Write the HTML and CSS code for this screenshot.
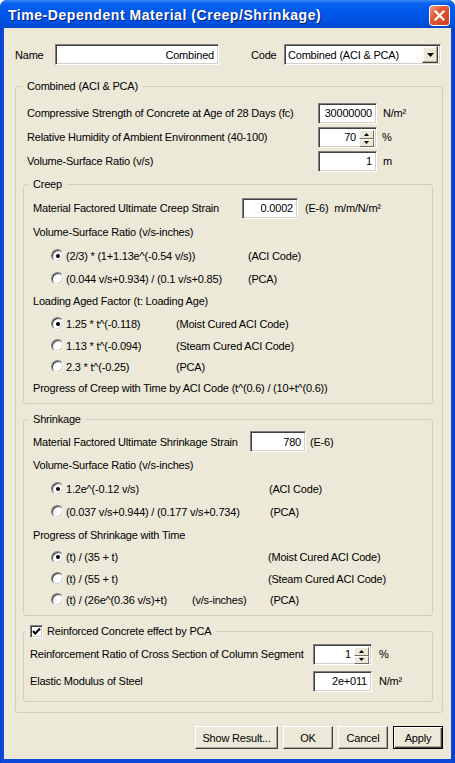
FILE: index.html
```html
<!DOCTYPE html>
<html>
<head>
<meta charset="utf-8">
<title>Time-Dependent Material (Creep/Shrinkage)</title>
<link rel="stylesheet" href="styles.css">
</head>
<body>
<div class="window">
  <div class="titlebar">
    <span class="title">Time-Dependent Material (Creep/Shrinkage)</span>
    <span class="close">
      <svg width="21" height="21" viewBox="0 0 21 21">
        <defs>
          <linearGradient id="cg" x1="0" y1="0" x2="1" y2="1">
            <stop offset="0" stop-color="#F3A68C"/>
            <stop offset="0.35" stop-color="#E45C38"/>
            <stop offset="1" stop-color="#C63F1E"/>
          </linearGradient>
        </defs>
        <rect x="0.5" y="0.5" width="20" height="20" rx="3" fill="url(#cg)" stroke="#FFFFFF"/>
        <path d="M6.5 6.5 L14.5 14.5 M14.5 6.5 L6.5 14.5" stroke="#FFFFFF" stroke-width="2.2" stroke-linecap="square"/>
      </svg>
    </span>
  </div>
  <div class="frame">
    <div class="client">
      <div class="toprow">
        <span class="lbl-name">Name</span>
        <span class="edit name-edit">Combined</span>
        <span class="lbl-code">Code</span>
        <span class="combo">
          <span class="combo-text">Combined (ACI &amp; PCA)</span>
          <span class="drop"><svg width="7" height="4" viewBox="0 0 7 4"><path d="M0 0 H7 L3.5 4 Z" fill="#000"/></svg></span>
        </span>
      </div>

      <fieldset class="group outer">
        <legend>Combined (ACI &amp; PCA)</legend>
        <div class="row h24">
          <span class="lab lw291">Compressive Strength of Concrete at Age of 28 Days (fc)</span>
          <span class="edit ew59">30000000</span>
          <span class="unit">N/m²</span>
        </div>
        <div class="row h24">
          <span class="lab lw291">Relative Humidity of Ambient Environment (40-100)</span>
          <span class="edit ew59 spin-edit">
            <span class="val">70</span>
            <span class="spin">
              <span class="sb sb-up"><svg width="5" height="3" viewBox="0 0 5 3"><path d="M2.5 0 L5 3 H0 Z" fill="#000"/></svg></span>
              <span class="sb sb-dn"><svg width="5" height="3" viewBox="0 0 5 3"><path d="M0 0 H5 L2.5 3 Z" fill="#000"/></svg></span>
            </span>
          </span>
          <span class="unit unit-pct">%</span>
        </div>
        <div class="row h24">
          <span class="lab lw291">Volume-Surface Ratio (v/s)</span>
          <span class="edit ew59">1</span>
          <span class="unit">m</span>
        </div>

        <fieldset class="group creep">
          <legend>Creep</legend>
          <div class="row h24">
            <span class="lab lw209">Material Factored Ultimate Creep Strain</span>
            <span class="edit ew56">0.0002</span>
            <span class="unit unit7">(E-6)  m/m/N/m²</span>
          </div>
          <div class="row h24"><span class="lab">Volume-Surface Ratio (v/s-inches)</span></div>
          <div class="row h23 opt">
            <span class="radio"><span class="dot"></span></span>
            <span class="ftxt fw182">(2/3) * (1+1.13e^(-0.54 v/s))</span><span class="ftxt">(ACI Code)</span>
          </div>
          <div class="row h23 opt">
            <span class="radio"></span>
            <span class="ftxt fw182">(0.044 v/s+0.934) / (0.1 v/s+0.85)</span><span class="ftxt">(PCA)</span>
          </div>
          <div class="row h22"><span class="lab">Loading Aged Factor (t: Loading Age)</span></div>
          <div class="row h23 opt">
            <span class="radio"><span class="dot"></span></span>
            <span class="ftxt fw110">1.25 * t^(-0.118)</span><span class="ftxt">(Moist Cured ACI Code)</span>
          </div>
          <div class="row h21 opt">
            <span class="radio"></span>
            <span class="ftxt fw110">1.13 * t^(-0.094)</span><span class="ftxt">(Steam Cured ACI Code)</span>
          </div>
          <div class="row h21 opt">
            <span class="radio"></span>
            <span class="ftxt fw110">2.3 * t^(-0.25)</span><span class="ftxt">(PCA)</span>
          </div>
          <div class="row h21"><span class="lab">Progress of Creep with Time by ACI Code (t^(0.6) / (10+t^(0.6))</span></div>
        </fieldset>

        <fieldset class="group shrink">
          <legend>Shrinkage</legend>
          <div class="row h23">
            <span class="lab lw217">Material Factored Ultimate Shrinkage Strain</span>
            <span class="edit ew56">780</span>
            <span class="unit unit5">(E-6)</span>
          </div>
          <div class="row h24"><span class="lab">Volume-Surface Ratio (v/s-inches)</span></div>
          <div class="row h23 opt">
            <span class="radio"><span class="dot"></span></span>
            <span class="ftxt fw203">1.2e^(-0.12 v/s)</span><span class="ftxt">(ACI Code)</span>
          </div>
          <div class="row h23 opt">
            <span class="radio"></span>
            <span class="ftxt fw204">(0.037 v/s+0.944) / (0.177 v/s+0.734)</span><span class="ftxt">(PCA)</span>
          </div>
          <div class="row h23"><span class="lab">Progress of Shrinkage with Time</span></div>
          <div class="row h22 opt">
            <span class="radio"><span class="dot"></span></span>
            <span class="ftxt fw202">(t) / (35 + t)</span><span class="ftxt">(Moist Cured ACI Code)</span>
          </div>
          <div class="row h21 opt">
            <span class="radio"></span>
            <span class="ftxt fw202">(t) / (55 + t)</span><span class="ftxt">(Steam Cured ACI Code)</span>
          </div>
          <div class="row h21 opt">
            <span class="radio"></span>
            <span class="ftxt fw126">(t) / (26e^(0.36 v/s)+t)</span><span class="ftxt fw78">(v/s-inches)</span><span class="ftxt">(PCA)</span>
          </div>
        </fieldset>

        <fieldset class="group reinf">
          <legend><span class="check"><svg width="11" height="11" viewBox="0 0 11 11"><path d="M2 5 L4.3 7.5 L9 2.5" stroke="#000" stroke-width="2" fill="none"/></svg></span><span class="leg-text">Reinforced Concrete effect by PCA</span></legend>
          <div class="row h22">
            <span class="lab lw283">Reinforcement Ratio of Cross Section of Column Segment</span>
            <span class="edit ew59 spin-edit">
              <span class="val">1</span>
              <span class="spin">
                <span class="sb sb-up"><svg width="5" height="3" viewBox="0 0 5 3"><path d="M2.5 0 L5 3 H0 Z" fill="#000"/></svg></span>
                <span class="sb sb-dn"><svg width="5" height="3" viewBox="0 0 5 3"><path d="M0 0 H5 L2.5 3 Z" fill="#000"/></svg></span>
              </span>
            </span>
            <span class="unit unit7">%</span>
          </div>
          <div class="row h22 gap5">
            <span class="lab lw283">Elastic Modulus of Steel</span>
            <span class="edit ew59">2e+011</span>
            <span class="unit unit7">N/m²</span>
          </div>
        </fieldset>
      </fieldset>

      <div class="buttons">
        <span class="btn bw83">Show Result...</span>
        <span class="btn">OK</span>
        <span class="btn">Cancel</span>
        <span class="btn def">Apply</span>
      </div>
    </div>
  </div>
</div>
</body>
</html>
```
FILE: styles.css
```css
* { box-sizing: border-box; }
html, body { margin: 0; padding: 0; background: #FFFFFF; }
body {
  font-family: "Liberation Sans", Arial, sans-serif;
  font-size: 11px;
  color: #000;
  letter-spacing: -0.2px;
}
.window {
  width: 455px;
  height: 763px;
  display: flex;
  flex-direction: column;
  border-radius: 7px 7px 0 0;
  overflow: hidden;
  background: #0846D8;
}
.titlebar {
  height: 28px;
  flex: none;
  display: flex;
  align-items: flex-start;
  padding: 0 5px 0 8px;
  background: linear-gradient(to bottom, #3C8CF8 0px, #0A62EE 3px, #0058EA 12px, #0052E2 22px, #0447CE 28px);
}
.title {
  font-family: "Liberation Sans", Arial, sans-serif;
  font-weight: bold;
  font-size: 14px;
  letter-spacing: 0.55px;
  color: #FFFFFF;
  line-height: 16px;
  margin-top: 7px;
  text-shadow: 1px 1px 0 #0A1E80;
}
.close {
  margin-left: auto;
  margin-top: 5px;
  width: 21px;
  height: 21px;
  display: flex;
}
.frame {
  flex: 1;
  padding: 0 4px 4px;
  background: linear-gradient(to right, #0A3CC8 0, #0C4ADC 2px, #0C4ADC 451px, #0A3CC8 455px);
  display: flex;
}
.client {
  flex: 1;
  background: #ECE9D8;
  padding: 16px 8px 10px 11px;
  display: flex;
  flex-direction: column;
}
.toprow {
  display: flex;
  align-items: center;
  height: 21px;
}
.lbl-name { width: 40px; }
.name-edit { width: 164px; }
.lbl-code { width: 33px; margin-left: 32px; }
.combo {
  width: 157px;
  height: 21px;
  background: #fff;
  border-top: 1px solid #808080;
  border-left: 1px solid #808080;
  border-bottom: 1px solid #fff;
  border-right: 1px solid #fff;
  box-shadow: inset 1px 1px 0 #404040, inset -1px -1px 0 #D4D0C8;
  display: flex;
  align-items: center;
  padding: 2px 2px 2px 3px;
}
.combo-text { flex: 1; }
.drop {
  width: 16px;
  height: 17px;
  background: #ECE9D8;
  border-top: 1px solid #F4F3EE;
  border-left: 1px solid #F4F3EE;
  border-right: 1px solid #404040;
  border-bottom: 1px solid #404040;
  box-shadow: inset -1px -1px 0 #ACA899, inset 1px 1px 0 #FFFFFF;
  display: flex;
  align-items: center;
  justify-content: center;
}

.edit {
  height: 21px;
  background: #fff;
  border-top: 1px solid #808080;
  border-left: 1px solid #808080;
  border-bottom: 1px solid #fff;
  border-right: 1px solid #fff;
  box-shadow: inset 1px 1px 0 #404040, inset -1px -1px 0 #D4D0C8;
  display: flex;
  align-items: center;
  justify-content: flex-end;
  padding: 0 4px 0 2px;
  flex: none;
}
.ew59 { width: 59px; }
.ew56 { width: 56px; }
.spin-edit { padding: 2px 2px 2px 2px; align-items: stretch; }
.spin-edit .val { display: flex; align-items: center; padding-right: 3px; }
.spin {
  width: 15px;
  display: flex;
  flex-direction: column;
}
.sb {
  flex: 1;
  background: #ECE9D8;
  border-top: 1px solid #FFFFFF;
  border-left: 1px solid #FFFFFF;
  border-right: 1px solid #716F64;
  border-bottom: 1px solid #716F64;
  display: flex;
  align-items: center;
  justify-content: center;
}
.sb-up { flex: 0 0 9px; }
.sb-dn { flex: 0 0 8px; }

fieldset.group {
  margin: 0;
  border: 1px solid #D0D0BF;
  border-radius: 3px;
  min-width: 0;
}
fieldset.group > legend {
  font-size: 11px;
  line-height: 14px;
  height: 14px;
  padding: 0 5px 0 4px;
  margin: 0;
}
.outer {
  margin-top: 14px !important;
  padding: 8px 9px 10px 7px;
}
.creep {
  margin-top: 4px !important;
  padding: 5px 0 5px 5px;
}
.shrink {
  margin-top: 8px !important;
  padding: 4px 0 5px 5px;
}
.reinf {
  margin-top: 8px !important;
  padding: 5px 0 9px 2px;
}
.reinf > legend {
  display: flex;
  align-items: center;
  padding-left: 4px;
}
.check {
  width: 13px;
  height: 13px;
  background: #fff;
  border-top: 1px solid #808080;
  border-left: 1px solid #808080;
  border-bottom: 1px solid #fff;
  border-right: 1px solid #fff;
  box-shadow: inset 1px 1px 0 #404040, inset -1px -1px 0 #D4D0C8;
  display: flex;
  align-items: center;
  justify-content: center;
  margin-right: 4px;
}

.row {
  display: flex;
  align-items: center;
  padding-left: 4px;
  white-space: pre;
}
.h21 { height: 21px; }
.h22 { height: 22px; }
.h23 { height: 23px; }
.h24 { height: 24px; }
.gap5 { margin-top: 5px; }
.lab { flex: none; }
.lw291 { width: 291px; }
.lw209 { width: 209px; }
.lw217 { width: 217px; }
.lw283 { width: 283px; }
.unit { margin-left: 6px; }
.unit-pct { margin-left: 5px; }
.unit7 { margin-left: 7px; }
.unit5 { margin-left: 4px; }

.opt { padding-left: 22px; }
.radio {
  width: 13px;
  height: 13px;
  border-radius: 50%;
  background: #fff;
  border: 1px solid;
  border-color: #808080 #F4F3EE #F4F3EE #808080;
  box-shadow: inset 1px 1px 0 #404040, inset -1px -1px 0 #D4D0C8;
  display: flex;
  align-items: center;
  justify-content: center;
  margin-right: 2px;
  flex: none;
}
.dot {
  width: 4px;
  height: 4px;
  border-radius: 50%;
  background: #000;
}
.ftxt { flex: none; }
.fw182 { width: 182px; }
.fw110 { width: 110px; }
.fw203 { width: 203px; }
.fw204 { width: 204px; }
.fw202 { width: 202px; }
.fw126 { width: 126px; }
.fw78 { width: 78px; }

.buttons {
  display: flex;
  justify-content: flex-end;
  gap: 5px;
  margin-top: 13px;
  height: 23px;
}
.btn {
  width: 50px;
  height: 23px;
  background: #ECE9D8;
  border-top: 1px solid #FFFFFF;
  border-left: 1px solid #FFFFFF;
  border-right: 1px solid #404040;
  border-bottom: 1px solid #404040;
  box-shadow: inset -1px -1px 0 #ACA899;
  display: flex;
  align-items: center;
  justify-content: center;
}
.bw83 { width: 83px; }
.btn.def {
  border: 1px solid #000;
  box-shadow: inset 1px 1px 0 #FFFFFF, inset -1px -1px 0 #404040, inset -2px -2px 0 #ACA899;
}
```
